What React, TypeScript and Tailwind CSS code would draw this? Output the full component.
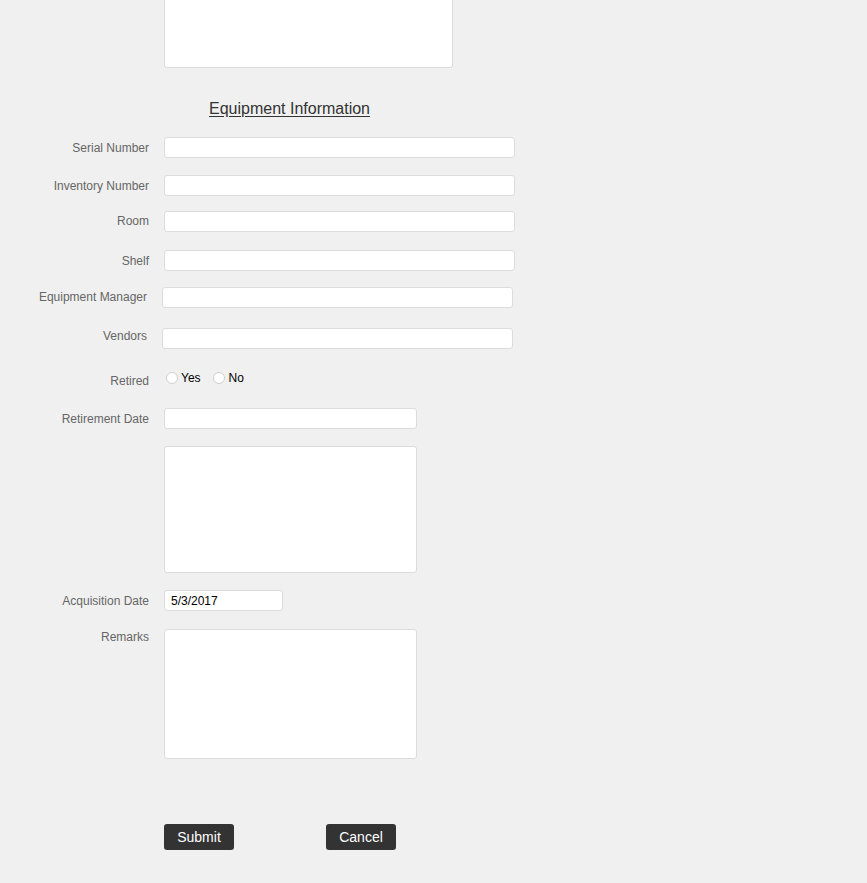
import React from "react";

const font = { fontFamily: '"Liberation Sans", Arial, sans-serif' };

function Label({ children, w = "w-[149px]", extra = "" }: { children: React.ReactNode; w?: string; extra?: string }) {
  return (
    <div className={`${w} shrink-0 text-right text-[12px] leading-[14px] text-[#666] ${extra}`}>{children}</div>
  );
}

function Input({ w = "w-[351px]", value = "" }: { w?: string; value?: string }) {
  return (
    <input
      readOnly
      value={value}
      className={`${w} h-[21px] shrink-0 rounded-[3px] border border-[#dcdcdc] bg-white px-[6px] text-[12px] text-black outline-none`}
      style={font}
    />
  );
}

export default function App() {
  return (
    <div className="min-h-screen overflow-hidden bg-[#f0f0f0] pb-[34px]" style={font}>
      <div className="pl-[164px]">
        <div className="-mt-[32px] h-[100px] w-[289px] rounded-[3px] border border-[#dcdcdc] bg-white" />
      </div>

      <div className="mt-[32px] pl-[209px] text-[16px] leading-[18px] text-[#333] underline underline-offset-[2px]">
        Equipment Information
      </div>

      <div className="mt-[19px] flex items-center gap-[15px]">
        <Label>Serial Number</Label>
        <Input />
      </div>

      <div className="mt-[17px] flex items-center gap-[15px]">
        <Label>Inventory Number</Label>
        <Input />
      </div>

      <div className="mt-[15px] flex items-center gap-[15px]">
        <Label extra="-mt-[2px]">Room</Label>
        <Input />
      </div>

      <div className="mt-[18px] flex items-center gap-[15px]">
        <Label>Shelf</Label>
        <Input />
      </div>

      <div className="mt-[16px] flex items-center gap-[15px]">
        <Label w="w-[147px]" extra="-mt-[2px]">Equipment Manager</Label>
        <Input />
      </div>

      <div className="mt-[20px] flex items-center gap-[15px]">
        <Label w="w-[147px]" extra="-mt-[6px]">Vendors</Label>
        <Input />
      </div>

      <div className="mt-[20px] flex h-[22px] items-center gap-[15px]">
        <Label extra="mt-[2px]">Retired</Label>
        <div className="-mt-[4px] flex items-center text-[12px] leading-[14px] text-black">
          <span className="ml-[2px] h-[12px] w-[12px] rounded-full border border-[#d0d0d0] bg-white" />
          <span className="ml-[3px]">Yes</span>
          <span className="ml-[12px] h-[12px] w-[12px] rounded-full border border-[#d0d0d0] bg-white" />
          <span className="ml-[4px]">No</span>
        </div>
      </div>

      <div className="mt-[17px] flex items-center gap-[15px]">
        <Label>Retirement Date</Label>
        <Input w="w-[253px]" />
      </div>

      <div className="mt-[17px] pl-[164px]">
        <div className="h-[127px] w-[253px] rounded-[3px] border border-[#dcdcdc] bg-white" />
      </div>

      <div className="mt-[17px] flex items-center gap-[15px]">
        <Label>Acquisition Date</Label>
        <Input w="w-[119px]" value="5/3/2017" />
      </div>

      <div className="mt-[18px] flex items-start gap-[15px]">
        <Label extra="pt-[1px]">Remarks</Label>
        <div className="h-[130px] w-[253px] rounded-[3px] border border-[#dcdcdc] bg-white" />
      </div>

      <div className="mt-[65px] flex pl-[164px]">
        <button className="h-[26px] w-[70px] rounded-[3px] bg-[#333] text-[14px] text-white" style={font}>
          Submit
        </button>
        <button className="ml-[92px] h-[26px] w-[70px] rounded-[3px] bg-[#333] text-[14px] text-white" style={font}>
          Cancel
        </button>
      </div>
    </div>
  );
}
